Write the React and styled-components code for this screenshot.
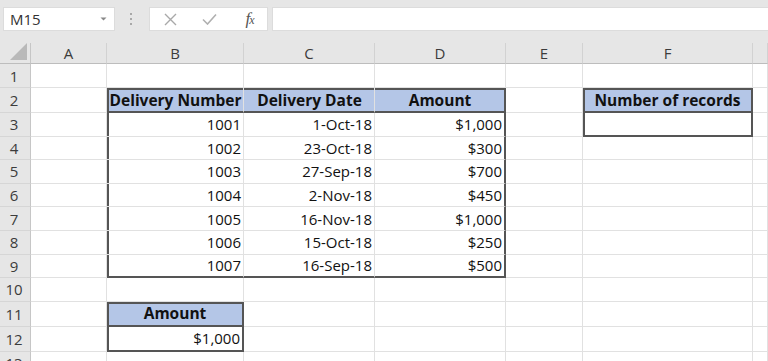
import React from 'react';
import styled, { createGlobalStyle } from 'styled-components';

const GlobalStyle = createGlobalStyle`
  html, body { margin: 0; padding: 0; background: #fff; overflow: hidden; }
  body { font-family: "Open Sans", "Noto Sans", sans-serif; }
`;

const DARK = '#555555';
const GRID = '#e1e1e1';

const Window = styled.div`
  width: 768px;
  height: 361px;
  overflow: hidden;
  background: #e6e6e6;
  display: flex;
  flex-direction: column;
`;

const FormulaBar = styled.div`
  display: flex;
  align-items: center;
  height: 24px;
  padding: 7px 0 12px 3px;
  flex: none;
`;

const NameBox = styled.div`
  width: 112px;
  height: 24px;
  box-sizing: border-box;
  background: #fff;
  border: 1px solid #dcdcdc;
  display: flex;
  align-items: center;
  justify-content: space-between;
  padding: 0 7px 0 6px;
  font-size: 15px;
  color: #333;
`;

const Separator = styled.div`
  width: 34px;
  display: flex;
  flex-direction: column;
  align-items: center;
  gap: 3px;
  padding-right: 2px;
  box-sizing: border-box;
`;

const Dot = styled.span`
  width: 2px;
  height: 2px;
  background: #a8a8a8;
`;

const FuncBox = styled.div`
  width: 119px;
  height: 24px;
  box-sizing: border-box;
  background: #fff;
  border: 1px solid #dcdcdc;
  display: grid;
  grid-template-columns: 40px 38px 1fr;
  align-items: center;
  justify-items: center;
`;

const Fx = styled.span`
  font-family: "Liberation Serif", "DejaVu Serif", serif;
  font-style: italic;
  font-size: 17px;
  color: #555;
  letter-spacing: -1px;
  padding-left: 4px;
  & > small { font-size: 12px; }
`;

const FormulaInput = styled.div`
  flex: 1;
  height: 24px;
  margin-left: 4px;
  box-sizing: border-box;
  background: #fff;
  border: 1px solid #dcdcdc;
  border-right: none;
`;

const Sheet = styled.div`
  display: grid;
  grid-template-columns: 31px 76px 137px 131px 131px 77px 170px 1fr;
  grid-template-rows: 21px 24px 25px repeat(8, 23.6px) 25px 25px 24px;
  background: #fff;
`;

const Corner = styled.div`
  background: #e6e6e6;
  border-right: 1px solid #c6c6c6;
  border-bottom: 1px solid #bdbdbd;
  box-sizing: border-box;
  display: flex;
  align-items: flex-end;
  justify-content: flex-end;
  padding: 0 3px 3px 0;
`;

const ColHeader = styled.div`
  background: #e6e6e6;
  border-right: 1px solid #d2d2d2;
  border-bottom: 1px solid #bdbdbd;
  box-sizing: border-box;
  display: flex;
  align-items: center;
  justify-content: center;
  font-size: 15px;
  color: #3c3c3c;
`;

const RowHeader = styled.div`
  background: #e6e6e6;
  border-right: 1px solid #c6c6c6;
  border-bottom: 1px solid #d6d6d6;
  box-sizing: border-box;
  display: flex;
  align-items: center;
  justify-content: center;
  padding-right: 2px;
  font-size: 15px;
  color: #3c3c3c;
`;

const Cell = styled.div`
  box-sizing: border-box;
  border-right: ${p => (p.$right ? `2px solid ${DARK}` : `1px solid ${GRID}`)};
  border-bottom: ${p => (p.$bottom ? `2px solid ${DARK}` : `1px solid ${GRID}`)};
  box-shadow: ${p =>
    [p.$top && `inset 0 2px 0 ${DARK}`, p.$left && `inset 2px 0 0 ${DARK}`].filter(Boolean).join(', ') || 'none'};
  background: ${p => (p.$fill ? '#b4c6e7' : '#fff')};
  display: flex;
  align-items: center;
  justify-content: ${p => (p.$align === 'center' ? 'center' : p.$align === 'right' ? 'flex-end' : 'flex-start')};
  padding: 0 2px 0 3px;
  font-size: ${p => (p.$bold ? '15.5px' : '15px')};
  font-weight: ${p => (p.$bold ? 700 : 400)};
  color: #111;
  white-space: nowrap;
  overflow: hidden;
`;

const columns = ['A', 'B', 'C', 'D', 'E', 'F', ''];

const records = [
  ['1001', '1-Oct-18', '$1,000'],
  ['1002', '23-Oct-18', '$300'],
  ['1003', '27-Sep-18', '$700'],
  ['1004', '2-Nov-18', '$450'],
  ['1005', '16-Nov-18', '$1,000'],
  ['1006', '15-Oct-18', '$250'],
  ['1007', '16-Sep-18', '$500'],
];

function buildCells() {
  const cells = {};
  const put = (c, r, props) => { cells[`${c}${r}`] = props; };
  ['Delivery Number', 'Delivery Date', 'Amount'].forEach((t, i) => {
    const c = 'BCD'[i];
    put(c, 2, { text: t, $bold: true, $fill: true, $align: 'center', $top: true, $bottom: true, $left: i === 0, $right: i === 2 });
  });
  records.forEach((rec, ri) => {
    const r = ri + 3;
    rec.forEach((t, i) => {
      const c = 'BCD'[i];
      put(c, r, { text: t, $align: 'right', $left: i === 0, $right: i === 2, $bottom: r === 9 });
    });
  });
  put('F', 2, { text: 'Number of records', $bold: true, $fill: true, $align: 'center', $top: true, $left: true, $right: true, $bottom: true });
  put('F', 3, { text: '', $left: true, $right: true, $bottom: true });
  put('B', 11, { text: 'Amount', $bold: true, $fill: true, $align: 'center', $top: true, $left: true, $right: true, $bottom: true });
  put('B', 12, { text: '$1,000', $align: 'right', $left: true, $right: true, $bottom: true });
  return cells;
}

const cellMap = buildCells();

const ChevronDown = () => (
  <svg width="7" height="4" viewBox="0 0 7 4"><path d="M0.5 0.5 L3.5 3.5 L6.5 0.5 Z" fill="#888" /></svg>
);

const CrossIcon = () => (
  <svg width="13" height="13" viewBox="0 0 13 13"><path d="M1 1 L12 12 M12 1 L1 12" stroke="#a9a9a9" strokeWidth="1.4" fill="none" /></svg>
);

const CheckIcon = () => (
  <svg width="15" height="12" viewBox="0 0 15 12"><path d="M1 6.5 L5.5 11 L14 1.5" stroke="#b0b0b0" strokeWidth="1.6" fill="none" /></svg>
);

const SelectAll = () => (
  <svg width="17" height="17" viewBox="0 0 17 17"><path d="M17 0 L17 17 L0 17 Z" fill="#b9b9b9" /></svg>
);

export default function App() {
  const rowNums = Array.from({ length: 13 }, (_, i) => i + 1);
  return (
    <>
      <GlobalStyle />
      <Window>
        <FormulaBar>
          <NameBox>
            <span>M15</span>
            <ChevronDown />
          </NameBox>
          <Separator>
            <Dot /><Dot /><Dot />
          </Separator>
          <FuncBox>
            <CrossIcon />
            <CheckIcon />
            <Fx>f<small>x</small></Fx>
          </FuncBox>
          <FormulaInput />
        </FormulaBar>
        <Sheet>
          <Corner><SelectAll /></Corner>
          {columns.map((c, i) => (
            <ColHeader key={`h${i}`}>{c}</ColHeader>
          ))}
          {rowNums.map(r => (
            <React.Fragment key={r}>
              <RowHeader>{r}</RowHeader>
              {columns.map((c, i) => {
                const props = cellMap[`${c}${r}`] || {};
                const { text, ...rest } = props;
                return <Cell key={`${r}-${i}`} {...rest}>{text}</Cell>;
              })}
            </React.Fragment>
          ))}
        </Sheet>
      </Window>
    </>
  );
}
